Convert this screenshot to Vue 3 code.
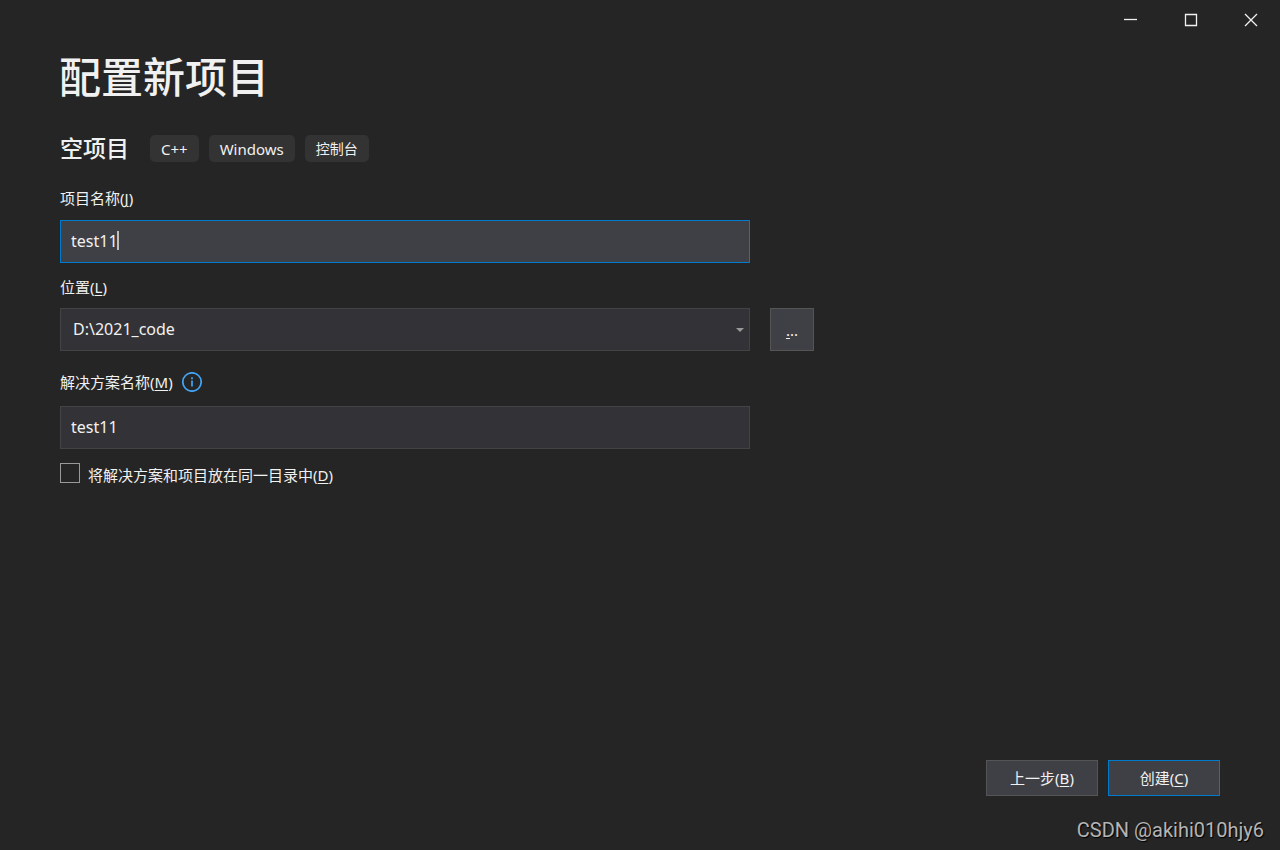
<script setup>
import { ref } from 'vue'

const tags = [
  { text: 'C++' },
  { text: 'Windows' },
  { text: '控制台', cjk: true }
]
const projectName = ref('test11')
const location = ref('D:\\2021_code')
const solutionName = ref('test11')
const sameFolder = ref(false)
</script>

<template>
  <div class="window">
    <header class="titlebar">
      <button type="button" aria-label="最小化">
        <svg width="14" height="14" viewBox="0 0 14 14"><path d="M0 6.5h13" /></svg>
      </button>
      <button type="button" aria-label="最大化">
        <svg width="14" height="14" viewBox="0 0 14 14"><path d="M1.5 1.5h11v11h-11z" /></svg>
      </button>
      <button type="button" aria-label="关闭">
        <svg width="14" height="14" viewBox="0 0 14 14"><path d="M1 1l12 12M13 1L1 13" /></svg>
      </button>
    </header>

    <main>
      <h1>配置新项目</h1>
      <div class="template">
        <h2>空项目</h2>
        <span v-for="tag in tags" :key="tag.text" class="tag" :class="{ cjk: tag.cjk }">{{ tag.text }}</span>
      </div>

      <form @submit.prevent>
        <label class="caption first" for="project">项目名称(<u>J</u>)</label>
        <div class="field active">
          <input id="project" v-model="projectName" type="text" autocomplete="off" spellcheck="false" />
          <span class="caret"></span>
        </div>

        <label class="caption second" for="location">位置(<u>L</u>)</label>
        <div class="location-row">
          <div class="field picker">
            <select id="location" v-model="location">
              <option>D:\2021_code</option>
            </select>
            <svg class="arrow" width="8" height="4" viewBox="0 0 8 4"><path d="M0 0h8L4 4z" /></svg>
          </div>
          <button type="button" class="browse" aria-label="浏览"><span><u>.</u>..</span></button>
        </div>

        <div class="caption third">
          <label for="solution">解决方案名称(<u>M</u>)</label>
          <svg class="info" width="20" height="20" viewBox="0 0 20 20">
            <circle cx="10" cy="10" r="9.2" />
            <path d="M10 8.5v6M10 5.2v2" />
          </svg>
        </div>
        <div class="field">
          <input id="solution" v-model="solutionName" type="text" autocomplete="off" spellcheck="false" />
        </div>

        <div class="check">
          <input id="same" v-model="sameFolder" type="checkbox" />
          <label for="same">将解决方案和项目放在同一目录中(<u>D</u>)</label>
        </div>
      </form>
    </main>

    <footer>
      <div class="actions">
        <button type="button">上一步(<u>B</u>)</button>
        <button type="button" class="primary">创建(<u>C</u>)</button>
      </div>
      <div class="signature">CSDN @akihi010hjy6</div>
    </footer>
  </div>
</template>

<style>
body {
  background: #252525;
}
</style>

<style scoped>
* {
  box-sizing: border-box;
}
.window {
  min-height: 100vh;
  display: flex;
  flex-direction: column;
  background: #252525;
  color: #f1f1f1;
  font: 15px/20px "Noto Sans", "Noto Sans CJK SC", sans-serif;
}
button,
input,
select {
  font: inherit;
  color: inherit;
  margin: 0;
  padding: 0;
  outline: none;
}
u {
  text-decoration-thickness: 1px;
  text-underline-offset: 2px;
}
.titlebar {
  display: flex;
  justify-content: flex-end;
}
.titlebar button {
  width: 60px;
  height: 40px;
  padding-left: 2px;
  border: 0;
  background: none;
  display: flex;
  align-items: center;
  justify-content: center;
}
.titlebar path {
  fill: none;
  stroke: #f1f1f1;
  stroke-width: 1.3;
}
main {
  flex: 1;
  padding: 7px 60px 0;
}
h1 {
  margin: 0 0 0 -1px;
  font-size: 42px;
  line-height: 60px;
  font-weight: 500;
}
.template {
  display: flex;
  align-items: center;
  gap: 10px;
  margin-top: 24px;
}
h2 {
  margin: 0 11px 0 0;
  font-size: 23px;
  line-height: 34px;
  font-weight: 500;
}
.tag {
  padding: 4px 11px 3px;
  border-radius: 5px;
  background: #333333;
}
.tag.cjk {
  font-size: 14px;
}
form {
  max-width: 754px;
}
.caption {
  display: flex;
  align-items: center;
  height: 20px;
  white-space: pre;
}
.first {
  margin: 23px 0 12px;
}
.second {
  margin: 14px 0 11px;
}
.third {
  margin: 21px 0 14px;
}
.info {
  margin-left: 9px;
  fill: none;
  stroke: #42a5f5;
  stroke-width: 1.7;
}
.field {
  display: flex;
  align-items: center;
  height: 43px;
  max-width: 690px;
  padding: 0 10px 2px;
  border: 1px solid #434346;
  background: #333337;
  font-size: 16px;
}
.field input {
  flex: 1;
  min-width: 0;
  height: 30px;
  border: 0;
  background: none;
}
.field.active {
  border-color: #007acc;
  background: #3f3f46;
}
.field.active input {
  flex: none;
  field-sizing: content;
  caret-color: transparent;
}
.caret {
  width: 2px;
  height: 19px;
  margin-left: -1px;
  background: #c0bfb9;
}
.location-row {
  display: flex;
  gap: 20px;
}
.picker {
  flex: 1;
  padding: 0 5px 2px 12px;
}
.picker select {
  flex: 1;
  min-width: 0;
  height: 30px;
  border: 0;
  background: none;
  appearance: none;
}
.arrow {
  margin-top: 2px;
  fill: #999999;
}
.browse {
  width: 44px;
  border: 1px solid #555555;
  background: #3f3f46;
}
.check {
  display: flex;
  align-items: flex-start;
  gap: 8px;
  margin-top: 14px;
}
.check input {
  appearance: none;
  width: 20px;
  height: 20px;
  border: 1px solid #999999;
}
.check input:checked {
  background: #007acc;
}
.check label {
  padding-top: 2px;
}
.actions {
  display: flex;
  justify-content: flex-end;
  gap: 10px;
  padding: 0 60px;
}
.actions button {
  width: 112px;
  height: 36px;
  border: 1px solid #555555;
  background: #3f3f46;
}
.actions .primary {
  border-color: #007acc;
}
.signature {
  margin-top: 22px;
  padding: 0 16px 8px;
  text-align: right;
  font: 20px/24px Roboto, sans-serif;
  color: #b4b4b4;
  text-shadow: 1px 1px 1px #000000;
}
</style>
